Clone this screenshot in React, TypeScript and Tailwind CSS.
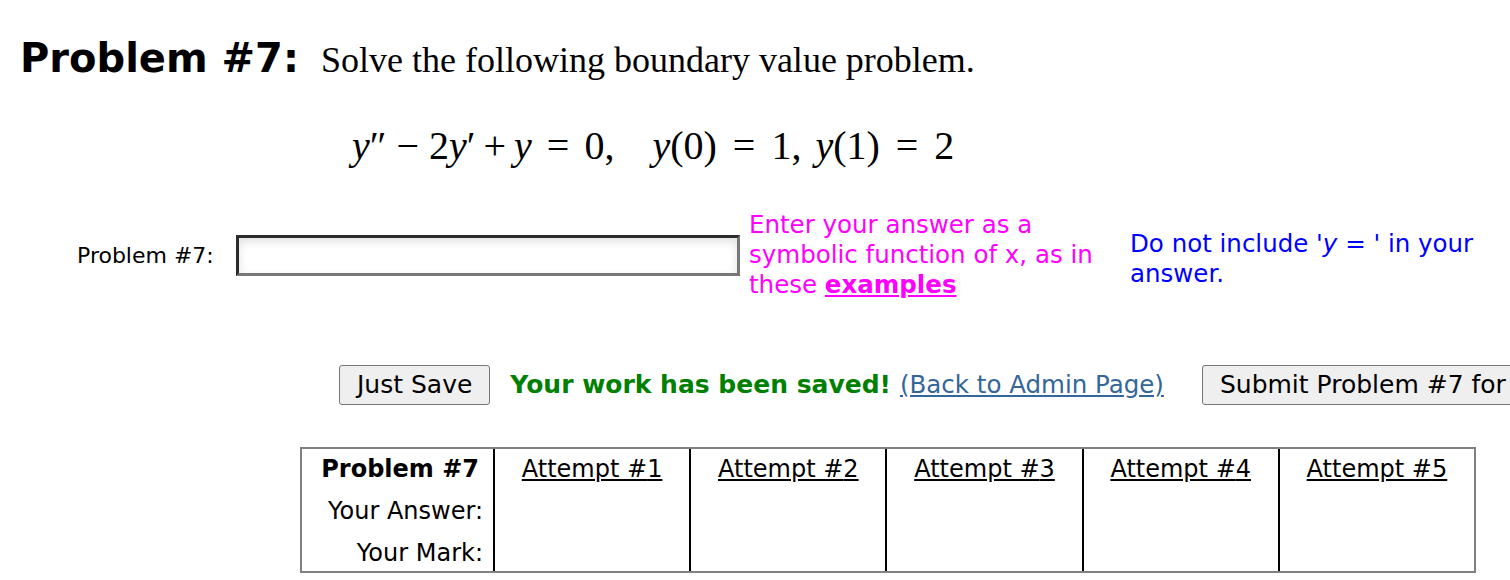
import React from 'react';

const sans = { fontFamily: '"DejaVu Sans", Verdana, sans-serif' };

const App: React.FC = () => {
  const attempts = [1, 2, 3, 4, 5];
  return (
    <div className="w-[1510px] h-[580px] overflow-hidden bg-white text-black" style={sans}>
      {/* heading */}
      <div className="flex items-baseline pl-[20px] pt-[29px] whitespace-nowrap">
        <span className="text-[40px] font-bold leading-[58px]">Problem #7:</span>
        <span className="ml-[22px] text-[36px] leading-[58px] font-['Liberation_Serif',serif]">
          Solve the following boundary value problem.
        </span>
      </div>

      {/* equation */}
      <div className="pl-[352px] mt-[27px] h-[60px] flex items-baseline whitespace-nowrap text-[40px] leading-[60px] font-['Liberation_Serif',serif]">
        <i>y</i><span>″</span>
        <span className="mx-[10px]">−</span>
        <span>2</span><i>y</i><span>′</span>
        <span className="mx-[8px]">+</span>
        <i>y</i>
        <span className="mx-[15px]">=</span>
        <span>0,</span>
        <span className="ml-[38px]"><i>y</i>(0)</span>
        <span className="mx-[16px]">=</span>
        <span>1,</span>
        <span className="ml-[14px]"><i>y</i>(1)</span>
        <span className="mx-[16px]">=</span>
        <span>2</span>
      </div>

      {/* answer row */}
      <div className="flex items-center mt-[34px] whitespace-nowrap">
        <span className="ml-[77px] w-[159px] text-[22px]">Problem #7:</span>
        <input
          type="text"
          className="w-[504px] h-[41px] bg-white border-[3px] border-t-[#2b2b2b] border-l-[#2b2b2b] border-b-[#777777] border-r-[#777777] shadow-[inset_0_4px_8px_rgba(0,0,0,0.12)] outline-none"
        />
        <div className="ml-[9px] w-[381px] text-[24.5px] leading-[30px] text-[#ff00ff] whitespace-normal">
          Enter your answer as a symbolic function of x, as in these{' '}
          <a className="font-bold underline">examples</a>
        </div>
        <div className="w-[380px] text-[24.5px] leading-[30px] text-[#0000ff] whitespace-normal mt-[8px]">
          Do not include '<i>y</i> = ' in your answer.
        </div>
      </div>

      {/* buttons row */}
      <div className="flex items-center mt-[65px] pl-[339px] whitespace-nowrap">
        <button className="h-[40px] px-[17px] text-[25px] bg-[#efefef] border border-[#767676] rounded-[3px]">
          Just Save
        </button>
        <span className="ml-[20px] text-[25px] font-bold text-[#008000]">Your work has been saved!</span>
        <a className="ml-[9px] text-[24.5px] text-[#336699] underline">(Back to Admin Page)</a>
        <button className="ml-[38px] h-[40px] px-[17px] text-[25px] bg-[#efefef] border border-[#767676] rounded-[3px]">
          Submit Problem #7 for Grading
        </button>
      </div>

      {/* attempts table */}
      <div className="ml-[300px] mt-[42px] w-[1176px] border-2 border-[#808080] flex text-[24px]">
        <div className="w-[193px] flex flex-col items-end pr-[10px] border-r-2 border-black">
          <div className="h-[41px] leading-[41px] font-bold pr-[4px]">Problem #7</div>
          <div className="h-[43px] leading-[43px]">Your Answer:</div>
          <div className="h-[38px] leading-[40px]">Your Mark:</div>
        </div>
        {attempts.map((n) => (
          <div
            key={n}
            className={`flex-1 flex justify-center ${n < 5 ? 'border-r-2 border-black' : ''}`}
          >
            <a className="h-[41px] leading-[41px] underline">Attempt #{n}</a>
          </div>
        ))}
      </div>
    </div>
  );
};

export default App;
